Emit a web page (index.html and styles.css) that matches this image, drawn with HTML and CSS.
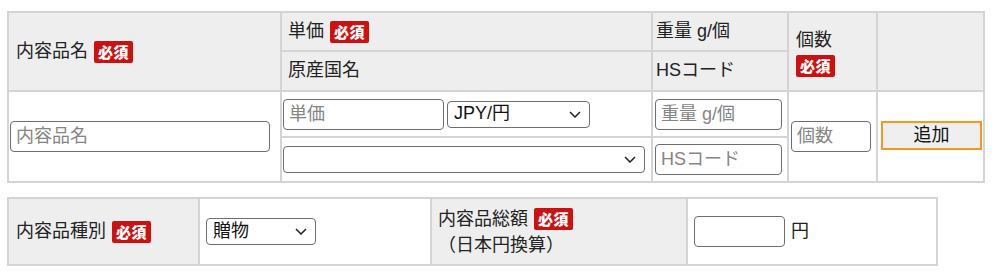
FILE: index.html
```html
<!DOCTYPE html>
<html lang="ja">
<head>
<meta charset="utf-8">
<title>内容品</title>
<link rel="stylesheet" href="styles.css">
</head>
<body>
<div class="items">
  <div class="cell head r12 c1"><span>内容品名</span><span class="req">必須</span></div>
  <div class="cell head c2 p6"><span>単価</span><span class="req">必須</span></div>
  <div class="cell head c3 p3"><span>重量 g/個</span></div>
  <div class="cell head r12 c4 stack"><span class="lbl">個数</span><span class="req solo">必須</span></div>
  <div class="cell head r12 c5"></div>
  <div class="cell head c2 p6 row2"><span>原産国名</span></div>
  <div class="cell head c3 p3 row2"><span>HSコード</span></div>

  <div class="cell r34 c1 p1"><input class="inp w-name" placeholder="内容品名"></div>
  <div class="cell c2 row3 p1">
    <input class="inp w-price" placeholder="単価">
    <span class="sel-wrap gap2"><select class="sel w-cur"><option>JPY/円</option></select><svg class="chev" viewBox="0 0 12 7" width="12" height="7"><polyline points="1,1 6,6 11,1"/></svg></span>
  </div>
  <div class="cell c3 row3 p2"><input class="inp w-weight" placeholder="重量 g/個"></div>
  <div class="cell r34 c4 p2"><input class="inp w-qty" placeholder="個数"></div>
  <div class="cell r34 c5 p2"><button class="add" type="button">追加</button></div>
  <div class="cell c2 row4 p1">
    <span class="sel-wrap"><select class="sel w-origin"><option></option></select><svg class="chev" viewBox="0 0 12 7" width="12" height="7"><polyline points="1,1 6,6 11,1"/></svg></span>
  </div>
  <div class="cell c3 row4 p2"><input class="inp w-weight" placeholder="HSコード"></div>
</div>

<div class="summary">
  <div class="cell head p7"><span>内容品種別</span><span class="req">必須</span></div>
  <div class="cell p6">
    <span class="sel-wrap"><select class="sel w-kind"><option>贈物</option></select><svg class="chev" viewBox="0 0 12 7" width="12" height="7"><polyline points="1,1 6,6 11,1"/></svg></span>
  </div>
  <div class="cell head p6 lines">
    <div><span>内容品総額</span><span class="req">必須</span></div>
    <div class="paren">（日本円換算）</div>
  </div>
  <div class="cell p6"><input class="inp w-total"><span class="yen">円</span></div>
</div>
</body>
</html>
```

FILE: styles.css
```css
* { box-sizing: border-box; }
body {
  margin: 0;
  background: #fff;
  color: #222;
  font-family: "Liberation Sans", "Noto Sans CJK JP", sans-serif;
  font-size: 18px;
  line-height: 1.2;
}
.items, .summary {
  display: grid;
  background: #d4d4d4;
  padding: 2px;
  gap: 2px;
  margin-left: 7px;
}
.items {
  margin-top: 11px;
  width: 978px;
  grid-template-columns: 271px 369px 134px 87px 105px;
  grid-template-rows: 37px 38px 44px 43px;
}
.summary {
  margin-top: 14px;
  width: 931px;
  grid-template-columns: 189px 230px 254px 248px;
  grid-template-rows: 65px;
}
.cell {
  background: #fff;
  display: flex;
  align-items: center;
  white-space: nowrap;
}
.head { background: #eeeeee; padding-left: 7px; }
.p1 { padding-left: 1px; }
.p2 { padding-left: 2px; }
.p3 { padding-left: 3px; }
.p6 { padding-left: 6px; }
.p7 { padding-left: 7px; }
.r12 { grid-row: 1 / 3; }
.r34 { grid-row: 3 / 5; }
.c1 { grid-column: 1; }
.c2 { grid-column: 2; }
.c3 { grid-column: 3; }
.c4 { grid-column: 4; }
.c5 { grid-column: 5; }
.row2 { grid-row: 2; }
.row3 { grid-row: 3; }
.row4 { grid-row: 4; }
.stack {
  flex-direction: column;
  align-items: flex-start;
  justify-content: center;
  padding-top: 2px;
}
.stack .lbl { line-height: 24px; }
.req {
  display: inline-block;
  margin-left: 6px;
  width: 39px;
  height: 22px;
  line-height: 22px;
  border-radius: 2px;
  background: #cc1111;
  color: #fff;
  font-family: "Noto Sans CJK JP", sans-serif;
  font-weight: 900;
  font-size: 15px;
  letter-spacing: 0.5px;
  text-align: center;
}
.req.solo { margin-left: 0; margin-top: 3px; }
.inp {
  height: 31px;
  border: 1px solid #6e6e6e;
  border-radius: 4px;
  padding: 0 5px;
  font: inherit;
  color: #222;
  background: #fff;
}
.inp::placeholder { color: #858585; }
.w-name { width: 260px; }
.w-price { width: 161px; }
.w-weight { width: 127px; }
.w-qty { width: 80px; }
.w-total { width: 91px; margin-right: 6px; }
.sel-wrap { position: relative; display: inline-flex; }
.gap2 { margin-left: 3px; }
.sel {
  appearance: none;
  -webkit-appearance: none;
  height: 27px;
  border: 1px solid #6e6e6e;
  border-radius: 4px;
  padding: 0 24px 0 6px;
  font: inherit;
  color: #111;
  background: #fff;
}
.w-cur { width: 143px; }
.w-origin { width: 362px; }
.w-kind { width: 110px; }
.chev {
  position: absolute;
  right: 9px;
  top: 10px;
  fill: none;
  stroke: #222;
  stroke-width: 1.5;
}
.add {
  appearance: none;
  -webkit-appearance: none;
  width: 101px;
  height: 29px;
  margin-left: 1px;
  margin-bottom: 2px;
  background: #efefef;
  border-width: 2px;
  border-style: solid;
  border-color: #f7981c;
  border-radius: 0;
  outline: none;
  font: inherit;
  color: #111;
  padding: 0;
}
.lines {
  flex-direction: column;
  align-items: flex-start;
  justify-content: center;
  padding-top: 1px;
}
.lines > div { line-height: 26px; display: flex; align-items: center; }
.yen { color: #222; }
```
